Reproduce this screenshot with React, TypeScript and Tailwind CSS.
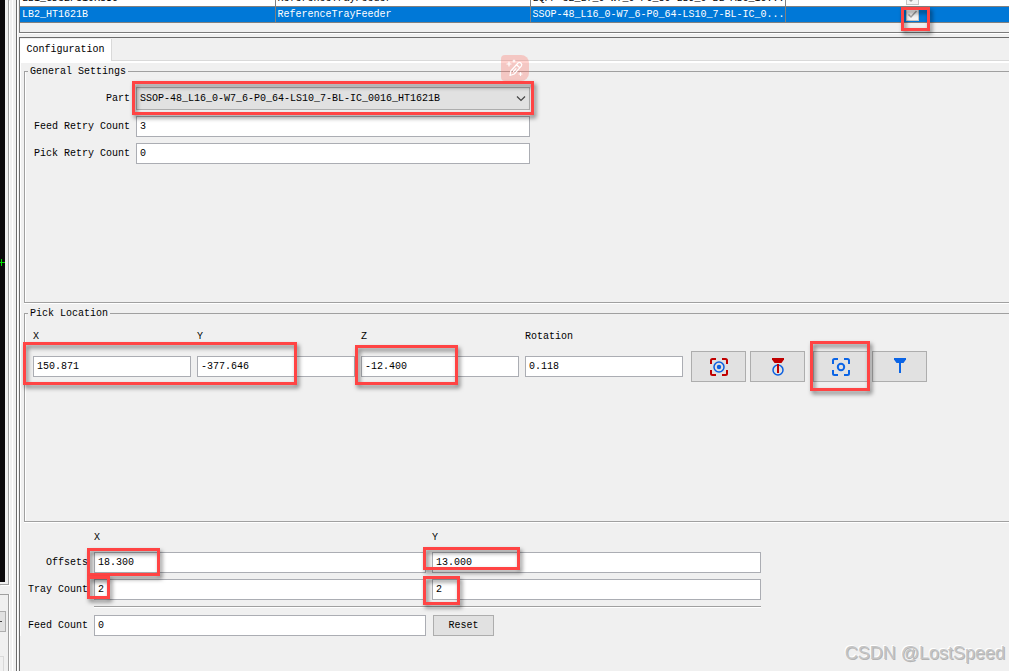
import React from 'react';

const inputClass =
  'block w-full min-w-0 h-[21px] px-[3px] bg-white border border-[#abadb3] rounded-none outline-none text-black';
const toolButtonClass =
  'w-[55px] h-[31px] flex items-center justify-center bg-[#e1e1e1] border border-[#adadad]';
const fieldsetClass =
  'min-w-0 border border-r-0 border-[#a0a0a0] shadow-[0_1px_0_#fff,inset_1px_0_0_#fff]';
const legendClass = 'ml-[3px] px-0.5 h-4 leading-[18px]';

interface FeederRow {
  name: string;
  type: string;
  part: string;
  selected: boolean;
}

const feeders: FeederRow[] = [
  {
    name: 'LB1_GD32F310K8U6',
    type: 'ReferenceTrayFeeder',
    part: 'LQFP-32_L7_0-W7_0-P0_80-LS9_0-BL-ASC_16...',
    selected: false,
  },
  {
    name: 'LB2_HT1621B',
    type: 'ReferenceTrayFeeder',
    part: 'SSOP-48_L16_0-W7_6-P0_64-LS10_7-BL-IC_0...',
    selected: true,
  },
];

// Highlight boxes drawn over the form
const highlights = [
  'left-[901px] top-[7px] w-[29px] h-[24px]',
  'left-[132px] top-[81px] w-[402px] h-[34px]',
  'left-[23px] top-[342px] w-[274px] h-[43px]',
  'left-[355px] top-[345px] w-[103px] h-[40px]',
  'left-[810px] top-[341px] w-[60px] h-[50px]',
  'left-[87px] top-[548px] w-[73px] h-[28px]',
  'left-[87px] top-[576px] w-[23px] h-[23px]',
  'left-[423px] top-[547px] w-[97px] h-[23px]',
  'left-[423px] top-[576px] w-[37px] h-[29px]',
];

const CornerMarks: React.FC<{ color: string }> = ({ color }) => (
  <path
    d="M1 6V2.500Q1 1 2.500 1H6M12 1h3.500Q17 1 17 2.500V6M17 12v3.500Q17 17 15.500 17H12M6 17H2.500Q1 17 1 15.500V12"
    fill="none"
    stroke={color}
    strokeWidth={2}
  />
);

const CameraToolIcon = () => (
  <svg width="18" height="18" viewBox="0 0 18 18">
    <CornerMarks color="#c00000" />
    <circle cx="9" cy="9" r="5" fill="none" stroke="#0a5fe0" strokeWidth="1.500" />
    <circle cx="9" cy="9" r="2.200" fill="#0a5fe0" />
  </svg>
);

const NozzleTargetIcon = () => (
  <svg width="18" height="20" viewBox="0 0 18 20">
    <circle cx="9" cy="13" r="5" fill="none" stroke="#0a5fe0" strokeWidth="1.500" />
    <path d="M3 1h12v1.500L12.500 6h-7L3 2.500z" fill="#c00000" />
    <path d="M8 7h2v9H8z" fill="#c00000" />
  </svg>
);

const CameraMoveIcon = () => (
  <svg width="18" height="18" viewBox="0 0 18 18">
    <CornerMarks color="#0a64e6" />
    <circle cx="9" cy="9" r="3.200" fill="none" stroke="#0a64e6" strokeWidth="2" />
  </svg>
);

const NozzleMoveIcon = () => (
  <svg width="18" height="20" viewBox="0 0 18 20">
    <path d="M3 1h12v1.500L12.500 6h-7L3 2.500z" fill="#0a64e6" />
    <path d="M8 6h2v10H8z" fill="#0a64e6" />
  </svg>
);

const FeederTable = () => (
  <div className="h-[33px] overflow-hidden border-l border-b border-[#7a7a7a]">
    <div className="h-[23px] flex flex-col justify-end">
      <table className="table-fixed border-collapse w-[1020px] shrink-0">
        <tbody>
          {feeders.map((f) => (
            <tr
              key={f.name}
              className={f.selected ? 'h-4 bg-[#0078d7] text-white' : 'h-4 bg-white'}
            >
              <td className="p-0 pl-0.5 h-4 leading-[15px] border-r border-b border-[#808080]">{f.name}</td>
              <td className="p-0 pl-0.5 h-4 leading-[15px] border-r border-b border-[#808080]">{f.type}</td>
              <td className="p-0 pl-0.5 h-4 leading-[15px] border-r border-b border-[#808080] whitespace-nowrap">{f.part}</td>
              <td className="p-0 h-4 border-b border-[#808080]">
                <span className="relative block mx-auto w-[13px] h-[13px]">
                  <input
                    type="checkbox"
                    defaultChecked
                    aria-label={`${f.name} enabled`}
                    className="block appearance-none w-[13px] h-[13px] bg-[#f4f4f4] border border-[#c4c4c4]"
                  />
                  <svg className="absolute inset-0 pointer-events-none" width="13" height="13" viewBox="0 0 13 13">
                    <path d="M2.500 6.500L5 9l5.500-6" fill="none" stroke="#a0a0a0" strokeWidth="1.500" />
                  </svg>
                </span>
              </td>
            </tr>
          ))}
        </tbody>
      </table>
    </div>
  </div>
);

const GeneralSettings = () => (
  <fieldset className={`${fieldsetClass} h-[240px]`}>
    <legend className={legendClass}>General Settings</legend>
    <div className="pl-2 pt-2 grid grid-cols-[97px_minmax(0,394px)] gap-1.5 items-center">
      <label htmlFor="part" className="text-right">Part</label>
      <div className="relative">
        <select
          id="part"
          className="block appearance-none w-full h-[23px] px-[3px] bg-[#e1e1e1] border border-[#adadad] rounded-none"
        >
          <option>SSOP-48_L16_0-W7_6-P0_64-LS10_7-BL-IC_0016_HT1621B</option>
        </select>
        <svg className="absolute right-1 top-2 pointer-events-none" width="10" height="8" viewBox="0 0 10 8">
          <path d="M1 1.500l4 4 4-4" fill="none" stroke="#444" strokeWidth="1.200" />
        </svg>
      </div>
      <label htmlFor="feed-retry" className="text-right">Feed Retry Count</label>
      <input id="feed-retry" className={inputClass} defaultValue="3" />
      <label htmlFor="pick-retry" className="text-right">Pick Retry Count</label>
      <input id="pick-retry" className={inputClass} defaultValue="0" />
    </div>
  </fieldset>
);

const PickLocation = () => (
  <fieldset className={`${fieldsetClass} h-[217px] mt-0.5`}>
    <legend className={legendClass}>Pick Location</legend>
    <div className="pl-2 pt-2 grid grid-cols-[repeat(4,minmax(0,158px))_auto] justify-start gap-1.5 items-center">
      <label htmlFor="pick-x">X</label>
      <label htmlFor="pick-y">Y</label>
      <label htmlFor="pick-z">Z</label>
      <label htmlFor="pick-rotation">Rotation</label>
      <span />
      <input id="pick-x" className={inputClass} defaultValue="150.871" />
      <input id="pick-y" className={inputClass} defaultValue="-377.646" />
      <input id="pick-z" className={inputClass} defaultValue="-12.400" />
      <input id="pick-rotation" className={inputClass} defaultValue="0.118" />
      <div className="pl-0.5 flex gap-2">
        <div className="flex gap-1">
          <button type="button" aria-label="Capture camera location" className={toolButtonClass}>
            <CameraToolIcon />
          </button>
          <button type="button" aria-label="Capture nozzle location" className={toolButtonClass}>
            <NozzleTargetIcon />
          </button>
        </div>
        <div className="flex gap-1">
          <button type="button" aria-label="Move camera to location" className={toolButtonClass}>
            <CameraMoveIcon />
          </button>
          <button type="button" aria-label="Move nozzle to location" className={toolButtonClass}>
            <NozzleMoveIcon />
          </button>
        </div>
      </div>
    </div>
  </fieldset>
);

const TraySettings = () => (
  <div className="pl-1 pt-2 grid grid-cols-[60px_minmax(0,332px)_minmax(0,329px)] gap-1.5 items-center">
    <span />
    <span>X</span>
    <span>Y</span>
    <label htmlFor="offset-x" className="text-right">Offsets</label>
    <input id="offset-x" className={inputClass} defaultValue="18.300" />
    <input aria-label="Offset Y" className={inputClass} defaultValue="13.000" />
    <label htmlFor="tray-x" className="text-right">Tray Count</label>
    <input id="tray-x" className={inputClass} defaultValue="2" />
    <input aria-label="Tray Count Y" className={inputClass} defaultValue="2" />
    <hr className="col-start-2 col-span-2 h-[3px] border-t border-[#a0a0a0] bg-linear-to-b from-white from-50% to-transparent to-50%" />
    <label htmlFor="feed-count" className="text-right">Feed Count</label>
    <input id="feed-count" className={inputClass} defaultValue="0" />
    <button type="button" className="ml-px w-[61px] h-[21px] bg-[#e1e1e1] border border-[#adadad]">
      Reset
    </button>
  </div>
);

// Edge of the camera view and the panel under it
const LeftEdge = () => (
  <div className="w-[10px] shrink-0 flex flex-col gap-[9px] overflow-hidden">
    <div className="h-[585px] shrink-0 pr-[3px] pb-0.5 border-r border-b border-[#a0a0a0] shadow-[1px_1px_0_#fff] mr-px">
      <div className="h-full w-[5px] bg-[#0c0a0c] flex items-center">
        <svg className="-mt-[58px]" width="5" height="9" viewBox="0 0 5 9">
          <path d="M0 4.500h5M1.500 1v7" stroke="#00e000" strokeWidth="1" />
        </svg>
      </div>
    </div>
    <div className="flex-1 mr-px border-t border-r border-[#a0a0a0] shadow-[1px_0_0_#fff] pt-4">
      <div className="w-1.5 h-[21px] bg-[#e1e1e1] border border-l-0 border-[#adadad] flex items-center">
        <div className="w-0.5 h-px bg-[#444]" />
      </div>
      <div className="mt-6 w-1 h-5 border-t border-r border-[#d9d9d9]" />
    </div>
  </div>
);

const App: React.FC = () => {
  return (
    <div className="relative h-screen overflow-hidden flex bg-[#f0f0f0] text-black text-[10px] leading-4 font-['Liberation_Mono',monospace]">
      <LeftEdge />
      <div className="w-[9px] shrink-0 pl-0.5 pr-px flex justify-between">
        <div className="w-px bg-white" />
        <div className="w-0.5 border-l border-[#6b6b6b] bg-white" />
      </div>
      <main className="flex-1 min-w-0 flex flex-col">
        <FeederTable />
        <div className="h-1 shrink-0 border-t border-white" />
        <div className="flex-1 border-l border-t border-[#6b6b6b]">
          <div className="flex h-[23px] pt-px">
            <button type="button" className="w-[92px] shrink-0 border-r border-[#d9d9d9] bg-white">
              Configuration
            </button>
            <div className="flex-1 border-b border-[#d9d9d9]" />
          </div>
          <div className="border-t-2 border-l border-white pl-[3px]">
            <GeneralSettings />
            <PickLocation />
            <TraySettings />
          </div>
        </div>
      </main>

      <div className="absolute left-[501px] top-[55px] w-7 h-[26px] rounded-l rounded-r-lg bg-[#ff6b5e]/30 flex items-center justify-center">
        <svg width="20" height="20" viewBox="0 0 20 20" fill="none" stroke="#fff" strokeWidth="1.200" strokeLinecap="round" strokeLinejoin="round">
          <path d="M5 17.500l.8-4.500L13 5q1.500-1.200 3 .2t.3 3L9.300 16zM11.500 6.700l3.300 3M8.500 13.500l2.500-2.800" />
          <path d="M4 4v4M2 6h4M9 2v2M8 3h2M15.500 14.500v3M14 16h3" />
        </svg>
      </div>

      {highlights.map((box) => (
        <div
          key={box}
          className={`absolute pointer-events-none border-3 border-[#ff4444] drop-shadow-[2px_3px_2px_rgba(0,0,0,0.5)] ${box}`}
        />
      ))}

      <div className="absolute right-1 bottom-1.5 text-lg leading-6 font-['Liberation_Sans',sans-serif] text-[#c4c4c4] [text-shadow:1px_1px_0_#b4b4b4,-1px_-1px_0_#fff]">
        CSDN @LostSpeed
      </div>
    </div>
  );
};

export default App;
